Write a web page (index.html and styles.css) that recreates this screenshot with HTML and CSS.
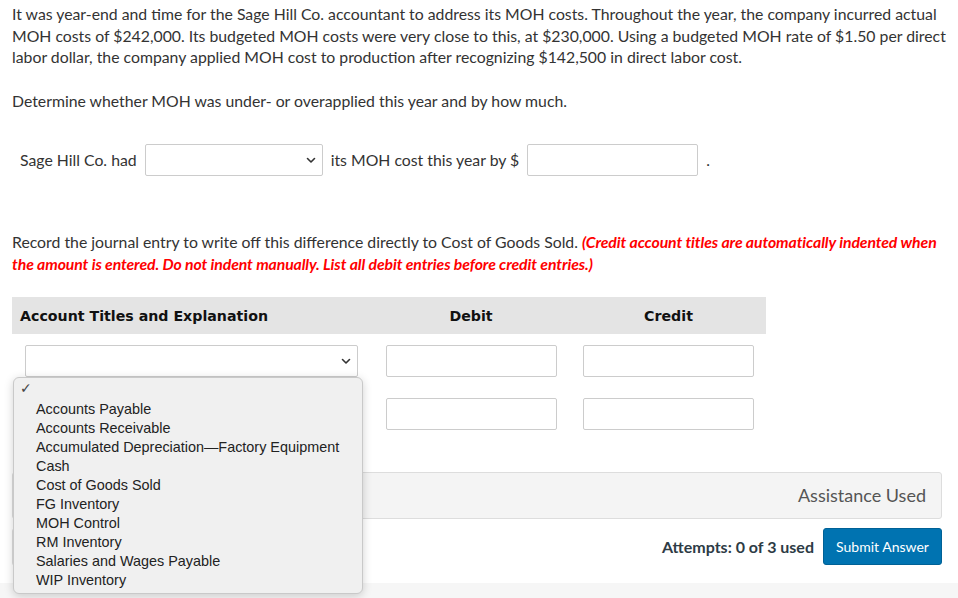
FILE: index.html
```html
<!DOCTYPE html>
<html lang="en">
<head>
<meta charset="utf-8">
<title>MOH question</title>
<link rel="stylesheet" href="styles.css">
</head>
<body>
<div class="page">
  <p class="intro">It was year-end and time for the Sage Hill Co. accountant to address its MOH costs. Throughout the year, the company incurred actual MOH costs of $242,000. Its budgeted MOH costs were very close to this, at $230,000. Using a budgeted MOH rate of $1.50 per direct labor dollar, the company applied MOH cost to production after recognizing $142,500 in direct labor cost.</p>
  <p class="para">Determine whether MOH was under- or overapplied this year and by how much.</p>

  <div class="fill-row">
    <span>Sage Hill Co. had</span>
    <div class="select small"><svg class="chev" width="10" height="7" viewBox="0 0 10 7"><path d="M1.5 1.5 L5 5 L8.5 1.5" fill="none" stroke="#333" stroke-width="1.6" stroke-linecap="round" stroke-linejoin="round"/></svg></div>
    <span>its MOH cost this year by $</span>
    <div class="input amount"></div>
    <span class="dot">.</span>
  </div>

  <p class="record">Record the journal entry to write off this difference directly to Cost of Goods Sold. <em class="warn">(Credit account titles are automatically indented when the amount is entered. Do not indent manually. List all debit entries before credit entries.)</em></p>

  <div class="journal">
    <div class="jhead">
      <div class="c-acct">Account Titles and Explanation</div>
      <div class="c-num">Debit</div>
      <div class="c-num c-credit">Credit</div>
    </div>
    <div class="jrow">
      <div class="c-acct"><div class="select wide"><svg class="chev" width="10" height="7" viewBox="0 0 10 7"><path d="M1.5 1.5 L5 5 L8.5 1.5" fill="none" stroke="#333" stroke-width="1.6" stroke-linecap="round" stroke-linejoin="round"/></svg></div></div>
      <div class="c-num"><div class="input num"></div></div>
      <div class="c-num c-credit"><div class="input num"></div></div>
    </div>
    <div class="jrow">
      <div class="c-acct"><div class="select wide"></div></div>
      <div class="c-num"><div class="input num"></div></div>
      <div class="c-num c-credit"><div class="input num"></div></div>
    </div>
  </div>

  <div class="assist">Assistance Used</div>

  <div class="actions">
    <div class="side-box"></div>
    <span class="attempts">Attempts: 0 of 3 used</span>
    <button class="submit">Submit Answer</button>
  </div>

  <div class="footer-strip"></div>

  <div class="menu">
    <div class="menu-check">✓</div>
    <ul class="menu-list">
      <li>Accounts Payable</li>
      <li>Accounts Receivable</li>
      <li>Accumulated Depreciation—Factory Equipment</li>
      <li>Cash</li>
      <li>Cost of Goods Sold</li>
      <li>FG Inventory</li>
      <li>MOH Control</li>
      <li>RM Inventory</li>
      <li>Salaries and Wages Payable</li>
      <li>WIP Inventory</li>
    </ul>
  </div>
</div>
</body>
</html>
```

FILE: styles.css
```css
html, body {
  margin: 0;
  padding: 0;
  background: #fff;
}
.page {
  position: relative;
  width: 958px;
  height: 598px;
  overflow: hidden;
  font-family: Lato, "Open Sans", sans-serif;
  font-size: 15.8px;
  color: #333;
}
.intro, .para, .record {
  margin: 0;
  padding: 0 12px;
  line-height: 21.5px;
  width: 938px;
}
.intro { padding-top: 3px; }
.para { margin-top: 22px; }

.fill-row {
  display: flex;
  align-items: center;
  margin-top: 33px;
  padding-left: 20px;
  height: 32px;
  white-space: nowrap;
}
.fill-row span { line-height: 32px; }
.select {
  position: relative;
  box-sizing: border-box;
  height: 32px;
  border: 1px solid #ccc;
  border-radius: 2px;
  background: #fff;
}
.select.small { width: 178px; margin: 0 8px 0 8px; }
.select.wide { width: 333px; }
.chev {
  position: absolute;
  right: 6px;
  top: 12px;
}
.input {
  box-sizing: border-box;
  height: 32px;
  border: 1px solid #ccc;
  border-radius: 2px;
  background: #fff;
}
.input.amount { width: 171px; margin: 0 8px 0 8px; }
.dot { line-height: 32px; }

.record { margin-top: 55px; }
.warn {
  color: #f00;
  font-weight: 700;
  font-style: italic;
  letter-spacing: -0.1px;
}

.journal {
  margin-top: 23px;
  margin-left: 12px;
  width: 754px;
}
.jhead {
  display: flex;
  align-items: center;
  height: 37px;
  background: #e4e4e4;
  font-family: "DejaVu Sans", Verdana, sans-serif;
  font-weight: 700;
  font-size: 14.2px;
  color: #111;
}
.c-acct { width: 359px; box-sizing: border-box; }
.jhead .c-acct { padding-left: 8px; }
.c-num { width: 200px; text-align: center; display: flex; justify-content: center; }
.c-credit { width: 195px; }
.jrow {
  display: flex;
  padding: 11px 0 10px;
}
.jrow .c-acct { padding-left: 13px; }
.input.num { width: 171px; }

.assist {
  box-sizing: border-box;
  margin: 32px 0 0 12px;
  width: 930px;
  height: 47px;
  background: #f4f4f4;
  border: 1px solid #ddd;
  border-radius: 3px;
  text-align: right;
  padding-right: 15px;
  line-height: 45px;
  font-size: 18px;
  color: #555;
}

.actions {
  display: flex;
  align-items: flex-start;
  margin: 9px 0 0 12px;
  width: 930px;
  height: 38px;
}
.side-box {
  width: 120px;
  height: 36px;
  border: 1px solid #ddd;
  border-radius: 3px;
  margin-right: auto;
}
.attempts {
  align-self: center;
  margin-top: -2px;
  font-weight: 700;
  font-size: 16px;
  color: #2d3b45;
  margin-right: 9px;
}
.submit {
  height: 37px;
  width: 119px;
  background: #0073b1;
  color: #fff;
  border: 1px solid #006196;
  border-radius: 3px;
  font-family: Lato, sans-serif;
  font-size: 14px;
  padding: 0;
}
.footer-strip {
  margin-top: 17px;
  height: 20px;
  background: #f6f6f6;
}

.menu {
  position: absolute;
  left: 13px;
  top: 377px;
  width: 350px;
  height: 217px;
  box-sizing: border-box;
  background: #f0f0f0;
  border: 1px solid #c9c9c9;
  border-radius: 6px;
  box-shadow: 0 2px 10px rgba(0,0,0,0.18);
  font-family: "Liberation Sans", Arial, sans-serif;
  font-size: 14.4px;
  color: #222;
}
.menu-check {
  position: absolute;
  left: 6px;
  top: 2px;
  font-family: "DejaVu Sans", sans-serif;
  font-size: 14px;
  color: #444;
}
.menu-list {
  list-style: none;
  margin: 22px 0 0 22px;
  padding: 0;
  line-height: 19px;
}
```
